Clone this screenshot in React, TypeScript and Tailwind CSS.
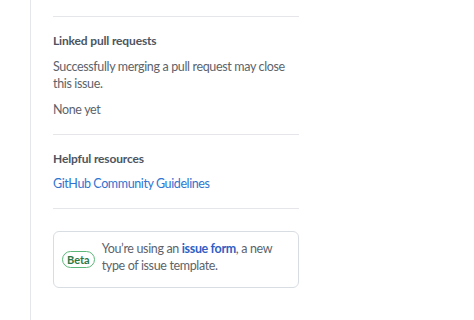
const App = () => {
   return (
      <div className="h-[320px] w-[474px] bg-white pl-[30px] text-[#5c636b]" style={{ fontFamily: 'Lato, "Noto Sans", sans-serif' }}>
         <div className="h-full border-l border-[#e4e6e9] pl-[22px]">
            <div className="w-[246px] pt-[16px]">
               <div className="border-t border-[#e4e6e9]" />

               {/* Linked pull requests */}
               <div className="pt-[15px] pb-[15px]">
                  <h3 className="text-[12px] font-bold leading-[18px] tracking-[-0.15px] text-[#4d5560]">Linked pull requests</h3>
                  <p className="mt-[8px] text-[12.5px] leading-[17px] tracking-[-0.35px]">Successfully merging a pull request may close this issue.</p>
                  <p className="mt-[9px] text-[12.5px] leading-[18px] tracking-[-0.35px]">None yet</p>
               </div>
               <div className="border-t border-[#e4e6e9]" />

               {/* Helpful resources */}
               <div className="pt-[15px] pb-[15px]">
                  <h3 className="text-[12px] font-bold leading-[18px] tracking-[-0.15px] text-[#4d5560]">Helpful resources</h3>
                  <a href="#" className="mt-[7px] block text-[12.5px] leading-[18px] tracking-[-0.4px] text-[#2f74d0]">
                     GitHub Community Guidelines
                  </a>
               </div>
               <div className="border-t border-[#e4e6e9]" />

               {/* Beta notice */}
               <div className="mt-[22px] flex h-[57px] items-center gap-[7px] rounded-md border border-[#d8dde3] pl-[8px] pr-[20px]">
                  <span className="rounded-full border border-[#5cb87a] px-[4px] text-[11px] font-bold leading-[15px] text-[#2b7a45]">Beta</span>
                  <p className="pb-[6px] text-[12.5px] leading-[17px] tracking-[-0.35px]">
                     You’re using an <a href="#" className="font-bold text-[#2f5fc4]">issue form</a>, a new type of issue template.
                  </p>
               </div>
            </div>
         </div>
      </div>
   );
};

export default App;
